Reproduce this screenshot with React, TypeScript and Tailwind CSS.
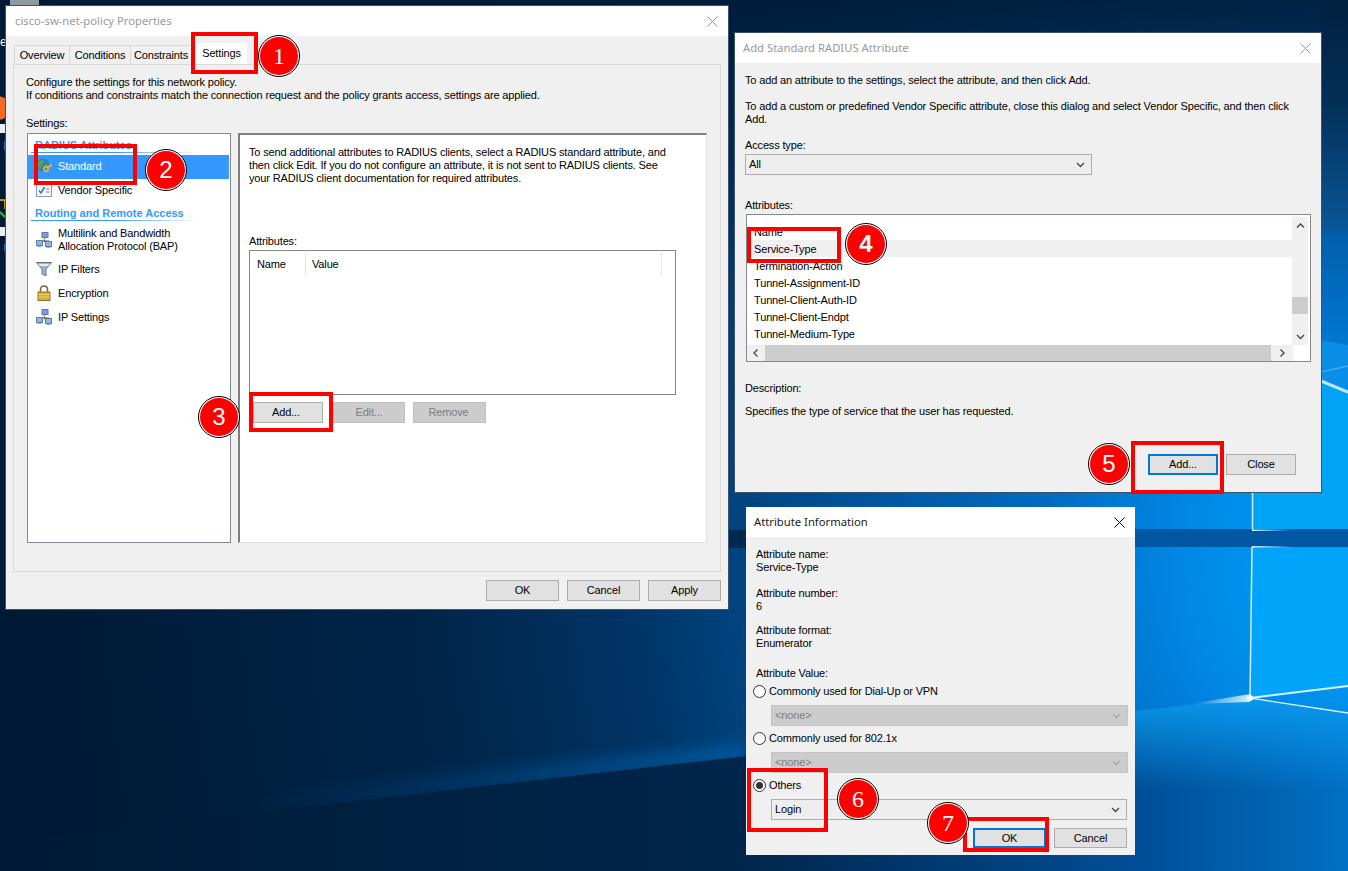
import type { ReactNode } from "react";

const titleFont = "font-['Noto_Sans',sans-serif] text-[11.25px]";

function CloseIcon({ dark }: { dark?: boolean }) {
  return (
    <svg width="11" height="11" viewBox="0 0 11 11" className={dark ? "text-black" : "text-[#999999]"}>
      <path d="M0.5 0.5L10.5 10.5M10.5 0.5L0.5 10.5" stroke="currentColor" fill="none" />
    </svg>
  );
}

function Chevron({ dir = "down", color = "#444444" }: { dir?: "down" | "up" | "left" | "right"; color?: string }) {
  const d = {
    down: "M1 2L4.5 5.5L8 2",
    up: "M1 5.5L4.5 2L8 5.5",
    left: "M5.5 0.5L2 4L5.5 7.5",
    right: "M2.5 0.5L6 4L2.5 7.5",
  }[dir];
  return (
    <svg width="9" height="8" viewBox="0 0 9 8">
      <path d={d} stroke={color} strokeWidth="1.3" fill="none" />
    </svg>
  );
}

function Titlebar({ title, dark, padLeft, padRight }: { title: string; dark?: boolean; padLeft: string; padRight: string }) {
  return (
    <div className={`flex h-[30px] shrink-0 items-center justify-between bg-white tracking-normal ${padLeft} ${padRight} ${titleFont} ${dark ? "text-[#1a1a1a]" : "text-[#999999]"}`}>
      <span className="pb-[2px]">{title}</span>
      <CloseIcon dark={dark} />
    </div>
  );
}

function Btn({ children, className = "", disabled, focused }: { children: ReactNode; className?: string; disabled?: boolean; focused?: boolean }) {
  let look = "border border-[#adadad] bg-[#e1e1e1] text-black";
  if (disabled) look = "border border-[#bfbfbf] bg-[#cccccc] text-[#7d7d7d]";
  if (focused) look = "border-2 border-[#0078d7] bg-[#e1e1e1] text-black";
  return <div className={`flex items-center justify-center ${look} ${className}`}>{children}</div>;
}

function Combo({ value, className = "", disabled }: { value: string; className?: string; disabled?: boolean }) {
  const look = disabled ? "border-[#c4c4c4] bg-[#cccccc] text-[#7d7d7d]" : "border-[#adadad] bg-[#eeeeee] text-black";
  return (
    <div className={`flex items-center justify-between border pl-[3px] pr-[6px] ${look} ${className}`}>
      <span>{value}</span>
      <Chevron color={disabled ? "#a8a8a8" : "#444444"} />
    </div>
  );
}

function Radio({ label, checked, className = "" }: { label: string; checked?: boolean; className?: string }) {
  return (
    <div className={`-ml-[3px] flex h-[14px] items-center gap-[3px] ${className}`}>
      <span className="flex h-[13px] w-[13px] items-center justify-center rounded-full border border-[#333333] bg-white">
        {checked && <span className="h-[7px] w-[7px] rounded-full bg-[#333333]" />}
      </span>
      <span>{label}</span>
    </div>
  );
}

function GlobeKeyIcon() {
  return (
    <svg width="16" height="16" viewBox="0 0 16 16">
      <circle cx="7" cy="7" r="6.5" fill="#2f7fc4" />
      <path d="M2 4C4 2 6 3 7 2C9 3 8 5 6 6C5 8 6 10 4 11C2 9 1 6 2 4ZM9 7C11 6 12 7 13 8C12 10 11 11 9 11C8 10 8 8 9 7Z" fill="#5aa63c" />
      <circle cx="10" cy="11" r="2.2" fill="none" stroke="#e6b84a" strokeWidth="1.5" />
      <path d="M12 9.5L15.5 6M14 8L15.5 9" stroke="#e6b84a" strokeWidth="1.3" fill="none" />
    </svg>
  );
}

function ChecklistIcon() {
  return (
    <svg width="16" height="16" viewBox="0 0 16 16">
      <rect x="0.5" y="2.5" width="15" height="12" fill="#f4f7fb" stroke="#8e99a6" />
      <path d="M3 8.5L5 11L8.5 5" stroke="#2a72c8" strokeWidth="1.5" fill="none" />
      <path d="M10 7H13.5M10 10H13.5" stroke="#7f8a96" />
    </svg>
  );
}

function NetworkIcon() {
  return (
    <svg width="16" height="16" viewBox="0 0 16 16">
      <path d="M8.500 5V10M3.500 9H13" stroke="#4a4a4a" fill="none" />
      <rect x="6" y="0.500" width="6" height="5" fill="#6f9fe6" stroke="#5f7fa8" />
      <rect x="0.500" y="8.500" width="6" height="5" fill="#8fb5ee" stroke="#5f7fa8" />
      <rect x="9.500" y="9.500" width="6" height="5" fill="#8fb5ee" stroke="#5f7fa8" />
      <path d="M7 6H10L8.500 8.500Z" fill="#e0b040" />
      <path d="M1.500 14.500H5.500M10.500 15.500H14.500" stroke="#9aa6b4" />
    </svg>
  );
}

function FilterIcon() {
  return (
    <svg width="16" height="16" viewBox="0 0 16 16">
      <path d="M0.5 1.5H15.5L10 8V15L6 13V8Z" fill="#9fb4c4" stroke="#64788a" />
      <path d="M2.5 3H13.5L12 5H4Z" fill="#e4edf3" />
    </svg>
  );
}

function LockIcon() {
  return (
    <svg width="16" height="16" viewBox="0 0 16 16">
      <path d="M4.5 7V4.5C4.5 2.5 6 1 8 1C10 1 11.500 2.500 11.500 4.500V7" fill="none" stroke="#7a6a3a" strokeWidth="1.600" />
      <rect x="2" y="7" width="12" height="8.500" fill="#d8a838" stroke="#9a7420" />
      <path d="M2.500 9.500H13.500M2.500 12H13.500" stroke="#f0d070" />
    </svg>
  );
}

function NavRow({ icon, children, selected, className = "h-[24px] pb-[2px]" }: { icon: ReactNode; children: ReactNode; selected?: boolean; className?: string }) {
  return (
    <div className={`mr-px flex items-center gap-[6px] pl-[8px] ${selected ? "bg-[#3399ff] text-white" : "text-black"} ${className}`}>
      <span className="flex w-[16px] shrink-0">{icon}</span>
      <span>{children}</span>
    </div>
  );
}

function NavHeading({ children, className = "" }: { children: ReactNode; className?: string }) {
  return (
    <div className={className}>
      <div className="h-[14px] pl-[7px] text-[11px] leading-[14px] font-bold tracking-normal text-[#3399ff]">{children}</div>
      <div className="ml-[3px] h-px w-[170px] bg-gradient-to-r from-[#3399ff] via-[#3399ff] to-white" />
    </div>
  );
}

function Tab({ label, className = "" }: { label: string; className?: string }) {
  return (
    <div className={`mt-[3px] flex h-[19px] items-center justify-center border-t border-r border-[#d9d9d9] bg-[#f0f0f0] ${className}`}>{label}</div>
  );
}

function PropertiesWindow() {
  return (
    <div className="absolute top-[6px] left-[6px] flex h-[603px] w-[722px] flex-col bg-[#f0f0f0] shadow-[0_0_0_1px_#3c5268]">
      <Titlebar title="cisco-sw-net-policy Properties" padLeft="pl-[9px]" padRight="pr-[10px]" />
      <div className="flex flex-1 flex-col pt-[6px] pl-[7px]">
        <div className="relative z-10 flex h-[22px] pl-[1px]">
          <Tab label="Overview" className="w-[56px] border-l" />
          <Tab label="Conditions" className="w-[61px]" />
          <Tab label="Constraints" className="w-[61px]" />
          <div className="mt-px ml-[4px] flex h-[21px] w-[51px] items-center justify-center bg-white pb-px">Settings</div>
        </div>
        <div className="h-[508px] w-[708px] border border-[#d9d9d9] bg-[#f0f0f0] pt-[11px] pl-[12px]">
          <p>Configure the settings for this network policy.</p>
          <p>If conditions and constraints match the connection request and the policy grants access, settings are applied.</p>
          <p className="mt-[15px]">Settings:</p>
          <div className="mt-[3px] ml-px flex gap-[7px]">
            <div className="h-[410px] w-[204px] border border-[#828790] bg-white pt-[4px]">
              <NavHeading>RADIUS Attributes</NavHeading>
              <div className="mt-[2px]">
                <NavRow icon={<GlobeKeyIcon />} selected>Standard</NavRow>
                <NavRow icon={<ChecklistIcon />}>Vendor Specific</NavRow>
              </div>
              <NavHeading className="mt-[3px]">Routing and Remote Access</NavHeading>
              <div className="mt-px">
                <NavRow icon={<NetworkIcon />} className="h-[36px]">
                  Multilink and Bandwidth
                  <br />
                  Allocation Protocol (BAP)
                </NavRow>
                <NavRow icon={<FilterIcon />}>IP Filters</NavRow>
                <NavRow icon={<LockIcon />}>Encryption</NavRow>
                <NavRow icon={<NetworkIcon />}>IP Settings</NavRow>
              </div>
            </div>
            <div className="h-[410px] w-[469px] border-t-2 border-r border-b border-l-2 border-t-[#7f7f7f] border-r-[#e0e0e0] border-b-[#e0e0e0] border-l-[#7f7f7f] bg-white pt-[11px] pl-[9px]">
              <p className="w-[430px]">
                To send additional attributes to RADIUS clients, select a RADIUS standard attribute, and then click Edit. If you do not configure an attribute, it is not sent to RADIUS clients. See your RADIUS client documentation for required attributes.
              </p>
              <p className="mt-[50px]">Attributes:</p>
              <div className="mt-[2px] h-[145px] w-[427px] border border-[#828790] bg-white">
                <div className="mt-[1px] flex h-[24px] items-center">
                  <span className="flex h-full w-[56px] items-center border-r border-[#e5e5e5] pl-[7px]">Name</span>
                  <span className="flex h-full w-[356px] items-center border-r border-[#e5e5e5] pl-[6px]">Value</span>
                </div>
              </div>
              <div className="mt-[7px] flex">
                <Btn className="ml-[4px] h-[21px] w-[70px] pr-[4px]">Add...</Btn>
                <Btn disabled className="ml-[10px] h-[21px] w-[72px]">Edit...</Btn>
                <Btn disabled className="ml-[8px] h-[21px] w-[73px] pr-[2px]">Remove</Btn>
              </div>
            </div>
          </div>
        </div>
        <div className="mt-[8px] flex justify-end gap-[8px] pr-[7px]">
          <Btn className="h-[21px] w-[73px]">OK</Btn>
          <Btn className="h-[21px] w-[73px]">Cancel</Btn>
          <Btn className="h-[21px] w-[73px]">Apply</Btn>
        </div>
      </div>
    </div>
  );
}

function AddAttributeWindow() {
  const rows = ["Name", "Service-Type", "Termination-Action", "Tunnel-Assignment-ID", "Tunnel-Client-Auth-ID", "Tunnel-Client-Endpt", "Tunnel-Medium-Type"];
  return (
    <div className="absolute top-[33px] left-[735px] flex h-[459px] w-[586px] flex-col bg-[#f0f0f0] shadow-[0_0_0_1px_#3c5268]">
      <Titlebar title="Add Standard RADIUS Attribute" padLeft="pl-[8px]" padRight="pr-[10px]" />
      <div className="flex-1 pt-[11px] pl-[10px]">
        <p>To add an attribute to the settings, select the attribute, and then click Add.</p>
        <p className="mt-[13px] w-[565px]">To add a custom or predefined Vendor Specific attribute, close this dialog and select Vendor Specific, and then click Add.</p>
        <p className="mt-[13px]">Access type:</p>
        <Combo value="All" className="mt-[2px] h-[21px] w-[347px]" />
        <p className="mt-[24px]">Attributes:</p>
        <div className="mt-[2px] ml-px flex h-[148px] w-[565px] flex-col border border-[#828790] bg-white">
          <div className="flex h-[130px]">
            <div className="flex-1 pt-[8px]">
              {rows.map((row) => (
                <div key={row} className={`flex h-[17px] items-center pt-px pl-[7px] ${row === "Service-Type" ? "bg-[#f0f0f0]" : ""}`}>{row}</div>
              ))}
            </div>
            <div className="mt-[2px] mr-[2px] flex w-[16px] flex-col bg-[#f0f0f0]">
              <div className="flex h-[17px] items-center justify-center"><Chevron dir="up" /></div>
              <div className="mt-[63px] h-[17px] bg-[#cdcdcd]" />
              <div className="mt-[14px] flex h-[17px] items-center justify-center"><Chevron /></div>
            </div>
          </div>
          <div className="flex h-[16px] w-[546px] items-center bg-[#f0f0f0]">
            <div className="flex w-[18px] justify-center"><Chevron dir="left" /></div>
            <div className="h-full w-[506px] bg-[#cdcdcd]" />
            <div className="flex w-[22px] justify-center"><Chevron dir="right" /></div>
          </div>
        </div>
        <p className="mt-[20px]">Description:</p>
        <p className="mt-[10px]">Specifies the type of service that the user has requested.</p>
        <div className="mt-[36px] flex justify-end gap-[8px] pr-[25px]">
          <Btn focused className="h-[21px] w-[70px]">Add...</Btn>
          <Btn className="h-[21px] w-[70px]">Close</Btn>
        </div>
      </div>
    </div>
  );
}

function AttributeInfoWindow() {
  return (
    <div className="absolute top-[507px] left-[746px] flex h-[348px] w-[389px] flex-col bg-[#f0f0f0]">
      <Titlebar title="Attribute Information" dark padLeft="pl-[8px]" padRight="pr-[10px]" />
      <div className="flex-1 pt-[11px] pl-[10px]">
        <p>Attribute name:</p>
        <p>Service-Type</p>
        <p className="mt-[13px]">Attribute number:</p>
        <p>6</p>
        <p className="mt-[11px]">Attribute format:</p>
        <p>Enumerator</p>
        <p className="mt-[17px]">Attribute Value:</p>
        <Radio label="Commonly used for Dial-Up or VPN" className="mt-[4px]" />
        <Combo disabled value="<none>" className="mt-[7px] ml-[15px] h-[21px] w-[357px]" />
        <Radio label="Commonly used for 802.1x" className="mt-[5px]" />
        <Combo disabled value="<none>" className="mt-[7px] ml-[15px] h-[21px] w-[357px]" />
        <Radio label="Others" checked className="mt-[5px]" />
        <Combo value="Login" className="mt-[7px] ml-[15px] h-[21px] w-[356px]" />
        <div className="mt-[8px] flex justify-end gap-[8px] pr-[8px]">
          <Btn focused className="h-[20px] w-[73px]">OK</Btn>
          <Btn className="h-[20px] w-[73px]">Cancel</Btn>
        </div>
      </div>
    </div>
  );
}

function Badge({ n, className, font = "font-['Liberation_Serif',serif]" }: { n: string; className: string; font?: string }) {
  return (
    <div className={`absolute z-20 flex h-[42px] w-[42px] items-center justify-center rounded-full border border-black bg-white p-px ${className}`}>
      <span className={`flex h-full w-full items-center justify-center rounded-full bg-[#ff0000] text-[24px] leading-none tracking-normal text-white ${font}`}>{n}</span>
    </div>
  );
}

function RedBox({ className }: { className: string }) {
  return <div className={`absolute z-20 border-4 border-[#ff0000] ${className}`} />;
}

function Wallpaper() {
  return (
    <svg className="absolute inset-0" width="1348" height="871" viewBox="0 0 1348 871">
      <defs>
        <radialGradient id="wall" gradientUnits="userSpaceOnUse" cx="1400" cy="560" r="1350">
          <stop offset="0" stopColor="#00a8fa" />
          <stop offset="0.16" stopColor="#0088e6" />
          <stop offset="0.26" stopColor="#006cc2" />
          <stop offset="0.45" stopColor="#004c8e" />
          <stop offset="0.56" stopColor="#003668" />
          <stop offset="0.72" stopColor="#00254a" />
          <stop offset="1" stopColor="#001a35" />
        </radialGradient>
        <linearGradient id="top" x1="0" y1="0" x2="0" y2="1">
          <stop offset="0" stopColor="#001a35" stopOpacity="0.85" />
          <stop offset="1" stopColor="#001a35" stopOpacity="0" />
        </linearGradient>
        <linearGradient id="strip" gradientUnits="userSpaceOnUse" x1="0" y1="0" x2="0" y2="345">
          <stop offset="0" stopColor="#03203f" />
          <stop offset="0.3" stopColor="#033058" />
          <stop offset="0.66" stopColor="#0a5596" />
          <stop offset="0.68" stopColor="#005fae" />
          <stop offset="1" stopColor="#0078d0" />
        </linearGradient>
        <linearGradient id="floor" gradientUnits="userSpaceOnUse" x1="0" y1="0" x2="1348" y2="0">
          <stop offset="0" stopColor="#001a35" />
          <stop offset="0.55" stopColor="#00264c" />
          <stop offset="0.85" stopColor="#004f98" />
          <stop offset="1" stopColor="#0070c4" />
        </linearGradient>
        <linearGradient id="floorGlow" gradientUnits="userSpaceOnUse" x1="0" y1="695" x2="0" y2="790">
          <stop offset="0" stopColor="#0a9cf2" stopOpacity="0.95" />
          <stop offset="1" stopColor="#0a9cf2" stopOpacity="0" />
        </linearGradient>
        <linearGradient id="edge" gradientUnits="userSpaceOnUse" x1="250" y1="0" x2="746" y2="0">
          <stop offset="0" stopColor="#0064b0" stopOpacity="0" />
          <stop offset="1" stopColor="#0064b0" stopOpacity="0.6" />
        </linearGradient>
        <linearGradient id="streak" gradientUnits="userSpaceOnUse" x1="1190" y1="0" x2="1250" y2="0">
          <stop offset="0" stopColor="#bfeaff" stopOpacity="0" />
          <stop offset="1" stopColor="#e8f8ff" stopOpacity="0.9" />
        </linearGradient>
        <linearGradient id="fadeLine" x1="0" y1="0" x2="1" y2="0">
          <stop offset="0" stopColor="#d8f2ff" />
          <stop offset="1" stopColor="#d8f2ff" stopOpacity="0" />
        </linearGradient>
        <filter id="soft" x="-10%" y="-100%" width="120%" height="300%">
          <feGaussianBlur stdDeviation="7" />
        </filter>
      </defs>
      <rect width="1348" height="871" fill="url(#wall)" />
      <rect width="1348" height="280" fill="url(#top)" />
      <rect x="1321" y="0" width="27" height="345" fill="url(#strip)" />
      <polygon points="1321,340 1348,345 1348,393 1321,380" fill="#0a8ee8" />
      <polygon points="1252,440 1321,380 1348,393 1348,530 1252,530" fill="#00a4f5" />
      <polygon points="1251,547 1348,547 1348,686 1250,698" fill="#00a4f8" />
      <rect x="1000" y="529" width="348" height="18" fill="#0058a4" />
      <rect x="728" y="530" width="18" height="18" fill="#00294f" />
      <polygon points="250,815 746,762 746,742 250,796" fill="url(#edge)" filter="url(#soft)" />
      <polygon points="0,842 1250,698 1348,713 1348,871 0,871" fill="url(#floor)" />
      <polygon points="1135,711 1250,698 1348,713 1348,790 1135,790" fill="url(#floorGlow)" />
      <polygon points="1190,704 1250,694 1250,702" fill="url(#streak)" />
      <path d="M1252.500 440V530M1252 547L1250 698" stroke="#cfefff" strokeWidth="1.500" fill="none" />
      <rect x="1252" y="529.500" width="40" height="1.500" fill="url(#fadeLine)" />
      <rect x="1252" y="546" width="40" height="1.500" fill="url(#fadeLine)" />
      <path d="M1250 698L1348 686" stroke="#d8f4ff" strokeWidth="2" />
      <path d="M1250 698L1348 713" stroke="#d8f4ff" strokeWidth="1.300" />
      <path d="M1321 381L1348 392" stroke="#bfe6ff" strokeWidth="3" />
      <path d="M1321 372L1348 366" stroke="#55b8f5" />
      <circle cx="1250" cy="698" r="3" fill="#ffffff" />
      <rect x="10" y="0" width="29" height="6" fill="#8d9aa2" />
      <circle cx="-2" cy="108" r="12" fill="#f2692a" />
      <rect x="0" y="124" width="6" height="9" fill="#e8eef4" />
      <rect x="4" y="141" width="2" height="9" fill="#1f6fc0" />
      <path d="M0 200H5V209" stroke="#f5b400" strokeWidth="1.500" fill="none" />
      <path d="M0 212L6 218" stroke="#22c32a" strokeWidth="2" />
      <rect x="0" y="227" width="6" height="9" fill="#e8eef4" />
      <rect x="4" y="244" width="2" height="7" fill="#1f6fc0" />
      <text x="0" y="46" fill="#ffffff" fontSize="12" fontFamily="Liberation Sans">e</text>
    </svg>
  );
}

export default function App() {
  return (
    <div className="relative h-[871px] w-[1348px] overflow-hidden bg-[#001a35] font-['Liberation_Sans',Arial,sans-serif] text-[11px] leading-[13px] tracking-[-0.15px] text-black">
      <Wallpaper />
      <PropertiesWindow />
      <AddAttributeWindow />
      <AttributeInfoWindow />

      {/* Red annotation boxes and numbered markers drawn over the dialogs */}
      <RedBox className="top-[32px] left-[191px] h-[42px] w-[67px]" />
      <RedBox className="top-[144px] left-[34px] h-[41px] w-[103px]" />
      <RedBox className="top-[392px] left-[249px] h-[40px] w-[84px]" />
      <RedBox className="top-[227px] left-[747px] h-[36px] w-[94px]" />
      <RedBox className="top-[441px] left-[1131px] h-[53px] w-[93px]" />
      <RedBox className="top-[768px] left-[747px] h-[64px] w-[81px]" />
      <RedBox className="top-[817px] left-[963px] h-[35px] w-[86px]" />

      <Badge n="1" className="top-[35px] left-[258px]" />
      <Badge n="2" className="top-[149px] left-[145px]" font="font-['Liberation_Sans',sans-serif]" />
      <Badge n="3" className="top-[396px] left-[198px]" font="font-['Liberation_Sans',sans-serif]" />
      <Badge n="4" className="top-[223px] left-[845px]" font="font-['Liberation_Sans',sans-serif] font-bold" />
      <Badge n="5" className="top-[443px] left-[1088px]" font="font-['Liberation_Sans',sans-serif]" />
      <Badge n="6" className="top-[778px] left-[837px]" />
      <Badge n="7" className="top-[802px] left-[927px]" />
    </div>
  );
}
